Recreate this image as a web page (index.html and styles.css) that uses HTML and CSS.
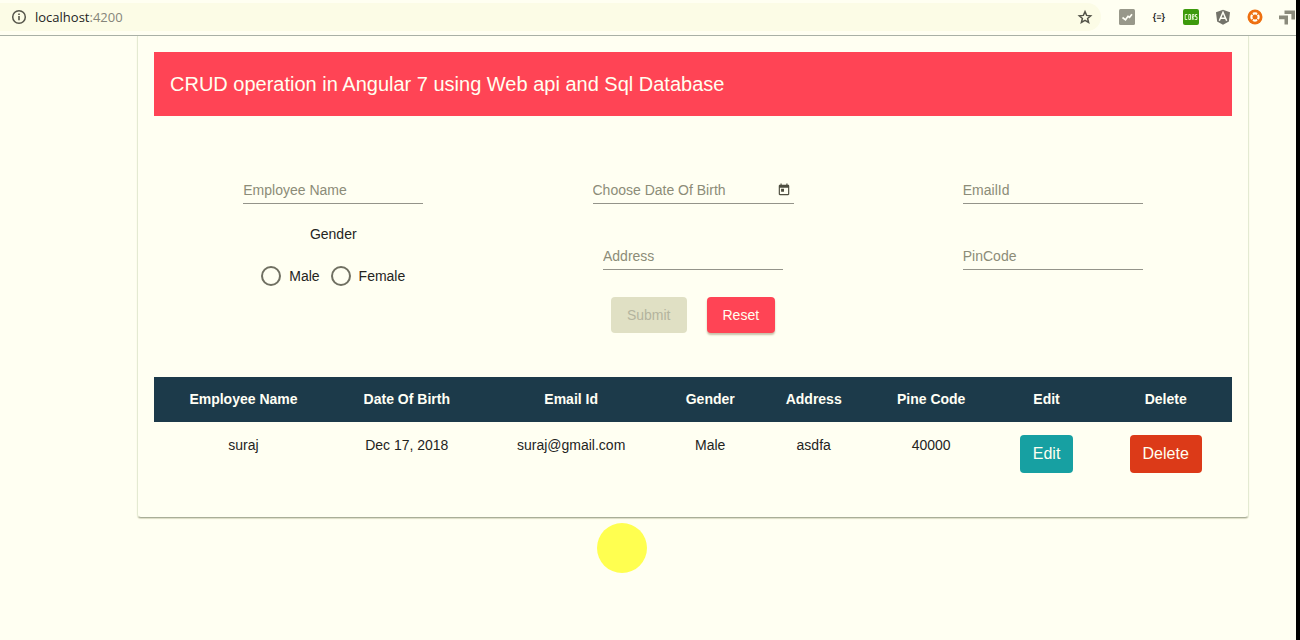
FILE: index.html
```html
<!DOCTYPE html>
<html lang="en">
<head>
<meta charset="utf-8">
<title>CRUD operation in Angular 7</title>
<link rel="stylesheet" href="styles.css">
</head>
<body>
<div class="window">
  <header class="browser-bar">
    <div class="address">
      <svg class="info" viewBox="0 0 16 16" width="16" height="16" aria-hidden="true"><circle cx="8" cy="8" r="6.3" fill="none" stroke="#55554a" stroke-width="1.5"/><path d="M8 7v4.2M8 4.4v1.5" stroke="#55554a" stroke-width="1.6"/></svg>
      <span class="url">localhost<span class="port">:4200</span></span>
      <svg class="star" viewBox="0 0 16 16" width="16" height="16" aria-hidden="true"><path d="M8 2.600l1.600 3.800 4.100.4-3.100 2.700 1 4L8 11.400l-3.600 2.100 1-4-3.100-2.700 4.100-.4z" fill="none" stroke="#55554a" stroke-width="1.5" stroke-linejoin="miter"/></svg>
    </div>
    <div class="extensions">
      <svg viewBox="0 0 16 16" width="16" height="16" aria-hidden="true"><rect width="16" height="16" rx="1.500" fill="#98988a"/><path d="M3.500 8.500l3 2.300 2.500-3.500 1.500 1 2.500-3" fill="none" stroke="#fffff5" stroke-width="1.700"/></svg>
      <span class="braces">{≡}</span>
      <svg viewBox="0 0 16 16" width="16" height="16" role="img" aria-label="CORS"><rect width="16" height="16" rx="2" fill="#3d9a0c"/><path d="M4.300 5.500H2.200v5h2.100M5.800 5.500h1.700v5H5.800zM9.300 10.900V5.500h1.700v2.400H9.300l1.800 3M14.200 5.500h-1.700v2.300h1.500v2.700h-1.900" fill="none" stroke="#f4ffe0" stroke-width=".9"/></svg>
      <svg viewBox="0 0 16 16" width="16" height="16" aria-hidden="true"><path d="M8 .8l7 2.400-1.100 9.200L8 15.700l-5.900-3.300L1 3.200z" fill="#73736a"/><path d="M4.300 11.800L8 3.300l3.700 8.500M5.800 9.300h4.400" fill="none" stroke="#fffff5" stroke-width="1.500"/></svg>
      <svg viewBox="0 0 16 16" width="16" height="16" aria-hidden="true"><circle cx="8" cy="8" r="7.500" fill="#ee7010"/><circle cx="8" cy="8" r="3.600" fill="none" stroke="#fffff5" stroke-width="2.200"/><path d="M3 3l2.800 2.800M13 3l-2.800 2.800M3 13l2.800-2.800M13 13l-2.800-2.800" stroke="#ee7010" stroke-width="1.400"/></svg>
      <svg viewBox="0 0 16 16" width="16" height="16" aria-hidden="true"><path d="M5.500 1.500H16v9h-3.600V5H5.500z" fill="#8b8b7c"/><path d="M0 6.500h9v9H5.500v-5.300H0z" fill="#8b8b7c"/></svg>
    </div>
  </header>

  <main class="card">
    <h1 class="title">CRUD operation in Angular 7 using Web api and Sql Database</h1>
    <form class="employee-form">
      <div class="cell"><input class="field" type="text" placeholder="Employee Name" aria-label="Employee Name"></div>
      <div class="cell">
        <div class="date-field">
          <input class="date-input" type="text" placeholder="Choose Date Of Birth" aria-label="Choose Date Of Birth">
          <button class="calendar" type="button" aria-label="Open calendar"><svg viewBox="0 0 24 24" width="14" height="14"><path d="M19 3h-1V1h-2v2H8V1H6v2H5c-1.110 0-2 .9-2 2v14c0 1.100.89 2 2 2h14c1.100 0 2-.9 2-2V5c0-1.100-.9-2-2-2zm0 16H5V8h14v11zM7 10h5v5H7z" fill="#4e4e40"/></svg></button>
        </div>
      </div>
      <div class="cell"><input class="field" type="text" placeholder="EmailId" aria-label="EmailId"></div>

      <fieldset class="gender">
        <legend class="gender-label">Gender</legend>
        <div class="options">
          <label class="option"><input class="radio" type="radio" name="gender">Male</label>
          <label class="option"><input class="radio" type="radio" name="gender">Female</label>
        </div>
      </fieldset>
      <div class="cell second"><input class="field" type="text" placeholder="Address" aria-label="Address"></div>
      <div class="cell second"><input class="field" type="text" placeholder="PinCode" aria-label="PinCode"></div>

      <div class="actions">
        <button class="action" type="submit" disabled>Submit</button>
        <button class="action reset" type="reset">Reset</button>
      </div>
    </form>

    <table class="employees">
      <colgroup><col class="w-name"><col class="w-date"><col class="w-email"><col class="w-gender"><col class="w-address"><col class="w-pin"><col class="w-edit"><col class="w-delete"></colgroup>
      <thead>
        <tr><th>Employee Name</th><th>Date Of Birth</th><th>Email Id</th><th>Gender</th><th>Address</th><th>Pine Code</th><th>Edit</th><th>Delete</th></tr>
      </thead>
      <tbody>
        <tr>
          <td>suraj</td><td>Dec 17, 2018</td><td>suraj@gmail.com</td><td>Male</td><td>asdfa</td><td>40000</td>
          <td><button class="btn edit" type="button">Edit</button></td>
          <td><button class="btn delete" type="button">Delete</button></td>
        </tr>
      </tbody>
    </table>
  </main>
  <div class="pointer"></div>
</div>
</body>
</html>
```
FILE: styles.css
```css
* {
  box-sizing: border-box;
}

body {
  margin: 0;
  background: #fffff2;
  color: #24241e;
  font-family: "Liberation Sans", Arial, sans-serif;
  font-size: 14px;
}

button,
input {
  font-family: inherit;
}

.window {
  position: relative;
  min-height: 100vh;
  border-right: 4px solid #000;
}

/* Browser bar */
.browser-bar {
  display: flex;
  align-items: center;
  height: 36px;
  padding-bottom: 2px;
  border-bottom: 1px solid #a9b0a6;
  overflow: hidden;
}

.address {
  display: flex;
  flex: 1;
  align-items: center;
  height: 28px;
  padding: 0 8px 0 11px;
  border-radius: 0 14px 14px 0;
  background: #fcfce6;
}

.url {
  flex: 1;
  margin-left: 8px;
  font-family: "Open Sans", sans-serif;
  font-size: 13px;
}

.port {
  color: #85857a;
}

.extensions {
  display: flex;
  align-items: center;
  gap: 16px;
  margin: 0 1px 0 18px;
}

.braces {
  width: 16px;
  font-size: 9px;
  font-weight: bold;
  line-height: 16px;
  text-align: center;
}

/* Card */
.card {
  margin: 0 47px 0 137px;
  padding: 16px;
  border: 1px solid #e4ead2;
  border-top: 0;
  border-bottom-color: #a9ae98;
  border-radius: 0 0 4px 4px;
  box-shadow: 0 1px 1px #dcdcc4;
}

.title {
  margin: 0;
  padding: 0 16px;
  background: #ff4455;
  color: #fffff0;
  font-size: 20px;
  font-weight: normal;
  line-height: 64px;
}

/* Form */
.employee-form {
  display: grid;
  grid-template-columns: 1fr 361px 1fr;
  justify-items: center;
  padding: 62px 0 44px;
}

.field,
.date-field {
  width: 180px;
  height: 26px;
  padding: 0 0 2px;
  border: 0;
  border-bottom: 1px solid #94948a;
  background: transparent;
  font-size: 14px;
}

.date-field {
  display: flex;
  width: 201px;
}

.date-input {
  flex: 1;
  min-width: 0;
  padding: 0;
  border: 0;
  background: transparent;
  font-size: 14px;
}

::placeholder {
  color: #8c8c78;
  opacity: 1;
}

.calendar {
  display: flex;
  align-items: center;
  padding: 0 3px;
  border: 0;
  background: transparent;
}

.gender {
  margin: 20px 0 0;
  padding: 0;
  border: 0;
}

.gender-label {
  margin: 0 auto;
  padding: 0;
  line-height: 20px;
}

.options {
  display: flex;
  gap: 11px;
  margin-top: 22px;
}

.option {
  display: flex;
  align-items: center;
  gap: 8px;
  line-height: 20px;
}

.radio {
  width: 20px;
  height: 20px;
  margin: 0;
  border: 2px solid #707062;
  border-radius: 50%;
  appearance: none;
}

.radio:checked {
  background: #ff4455;
}

.second {
  padding-top: 40px;
}

.actions {
  display: flex;
  grid-column: 2;
  gap: 20px;
  margin-top: 11px;
}

.action {
  height: 36px;
  padding: 0 16px;
  border: 0;
  border-radius: 4px;
  background: #e0e0c4;
  color: #b4b49e;
  font-size: 14px;
}

.reset {
  background: #ff4455;
  box-shadow: 0 2px 2px #c8c0a8;
  color: #fffff0;
}

/* Employee table */
.employees {
  width: 100%;
  margin-bottom: 16px;
  border-collapse: collapse;
  table-layout: fixed;
  line-height: 21px;
  text-align: center;
}

.w-name { width: 16.6%; }
.w-date { width: 13.7%; }
.w-email { width: 16.8%; }
.w-gender { width: 9%; }
.w-address { width: 10.2%; }
.w-pin { width: 11.6%; }
.w-edit { width: 9.8%; }
.w-delete { width: 12.3%; }

th {
  padding: 12px 0;
  background: #1c3a4a;
  color: #fffff5;
}

td {
  padding: 13px 0 12px;
  vertical-align: top;
}

.btn {
  display: block;
  height: 38px;
  margin: 0 auto;
  padding: 0 13px;
  border: 0;
  border-radius: 4px;
  color: #fffff0;
  font-size: 16px;
}

.edit {
  background: #17a0a2;
}

.delete {
  background: #dc3a18;
}

.pointer {
  position: absolute;
  top: 523px;
  left: 597px;
  width: 50px;
  height: 50px;
  border-radius: 50%;
  background: #ffff50;
}
```
